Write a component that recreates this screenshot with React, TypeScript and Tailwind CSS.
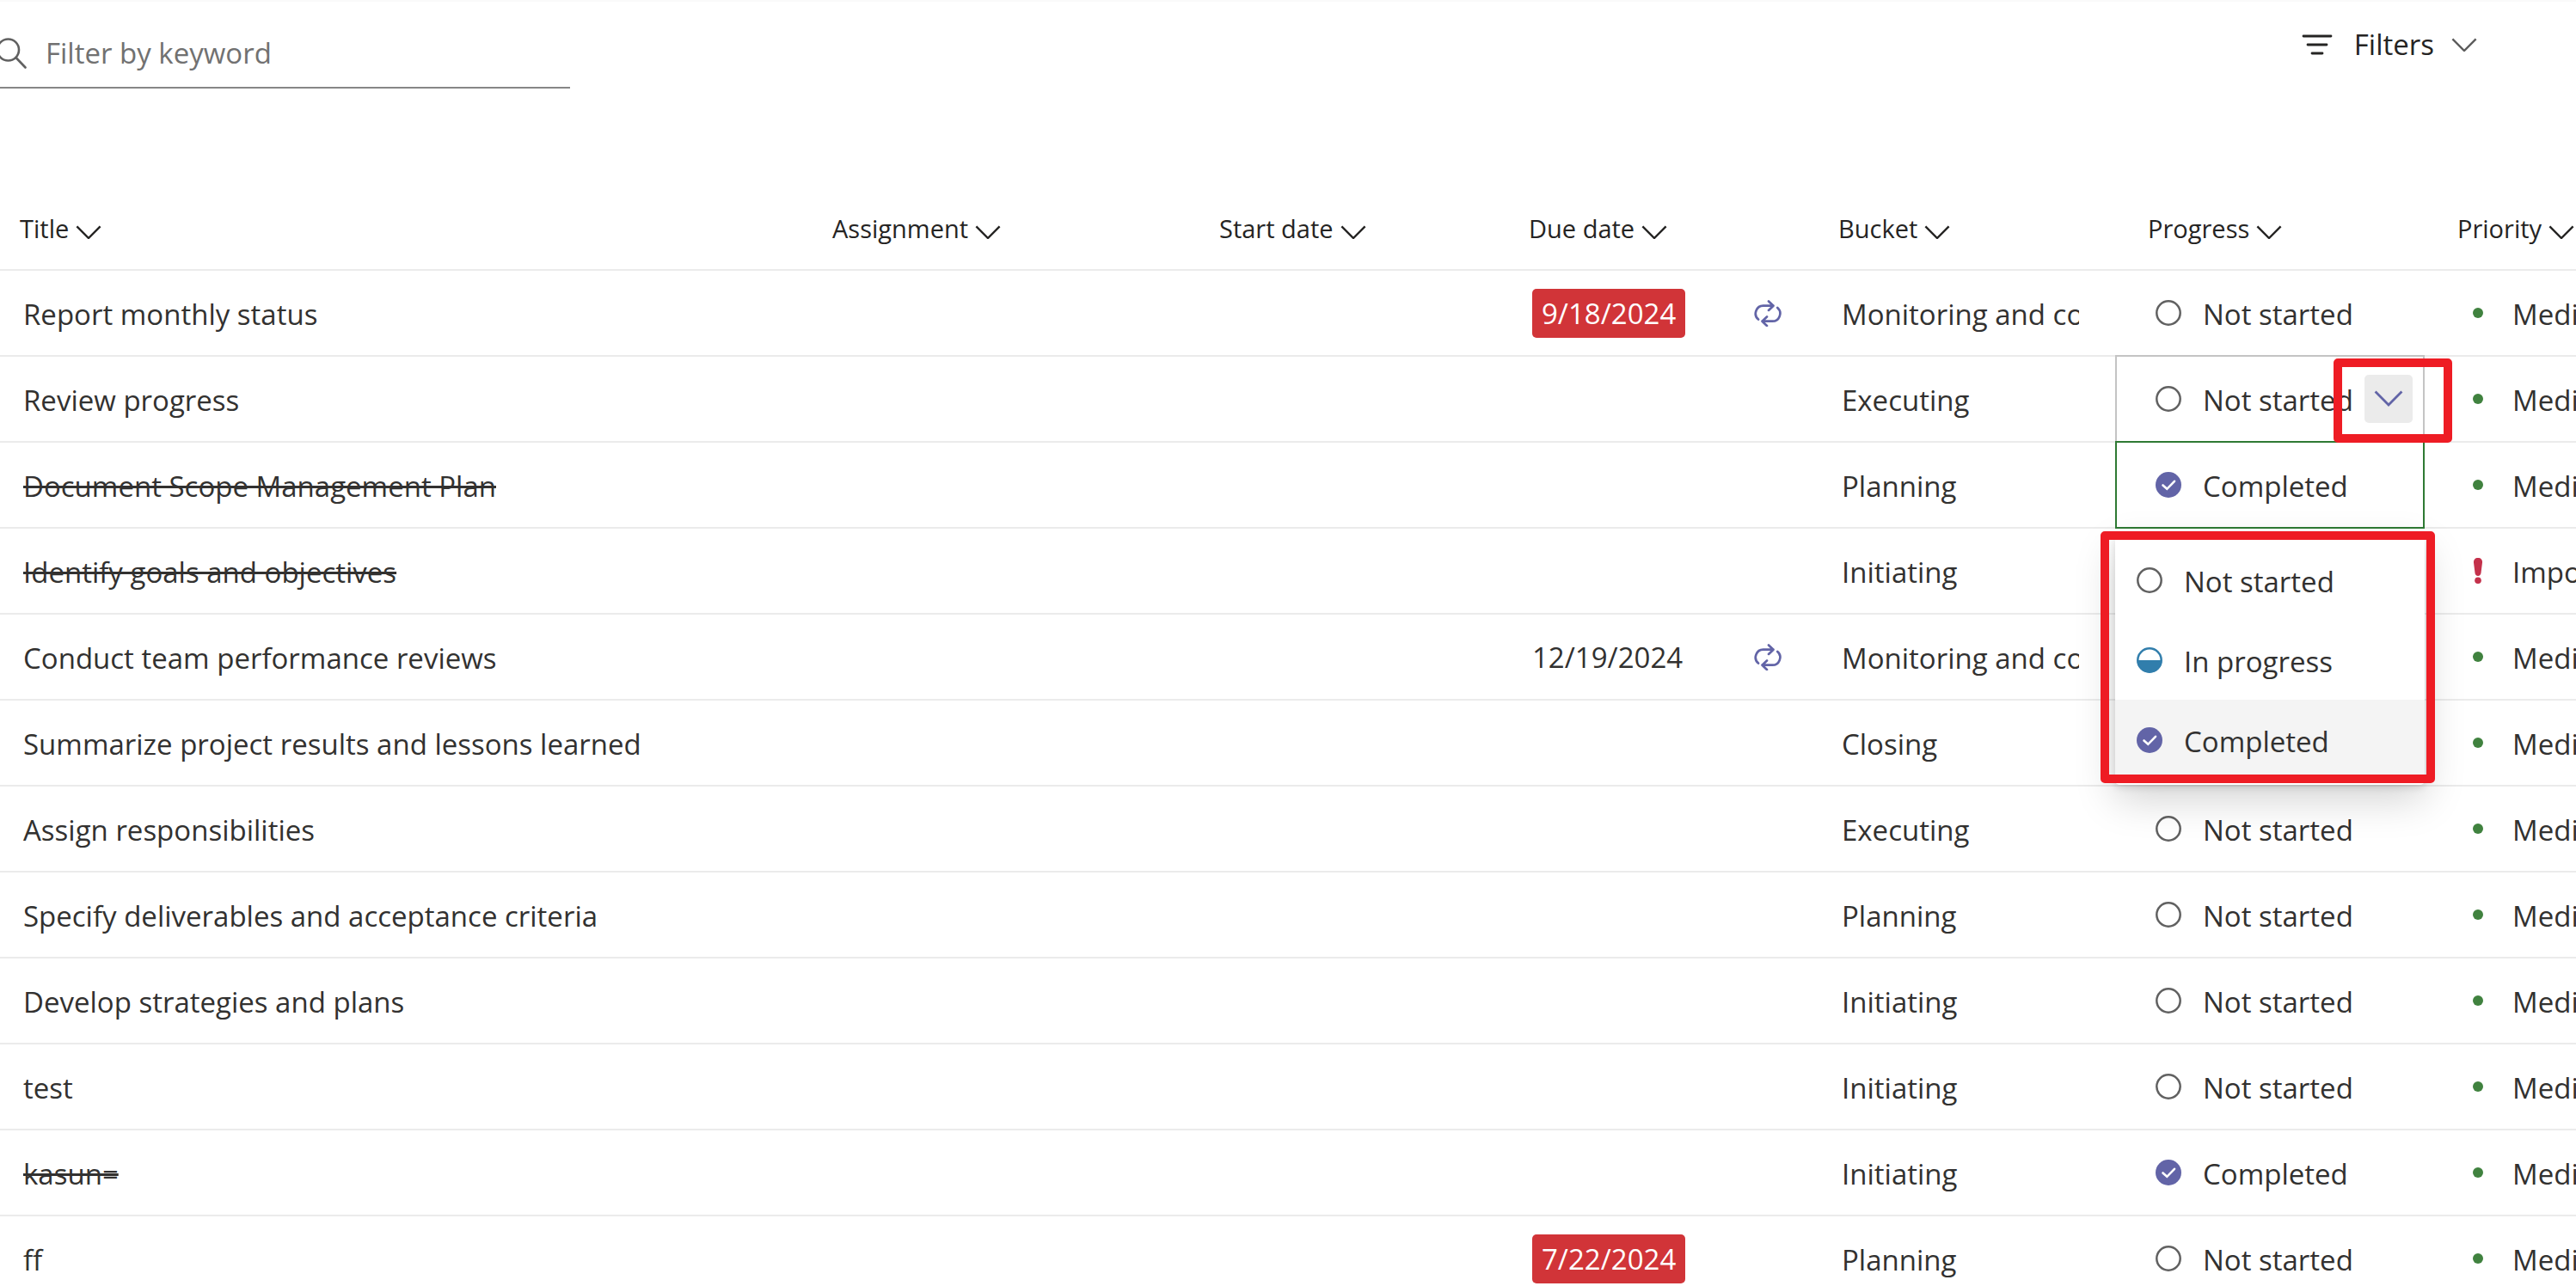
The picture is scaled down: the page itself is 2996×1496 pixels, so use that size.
import clsx from "clsx";

type Progress = "Not started" | "In progress" | "Completed";

type Task = {
  title: string;
  bucket: string;
  progress: Progress;
  priority: "Medium" | "Important";
  due?: string;
  late?: boolean;
  recurring?: boolean;
};

const columns = ["Title", "Assignment", "Start date", "Due date", "Bucket", "Progress", "Priority"];

const options: Progress[] = ["Not started", "In progress", "Completed"];

const tasks: Task[] = [
  { title: "Report monthly status", bucket: "Monitoring and controlling", progress: "Not started", priority: "Medium", due: "9/18/2024", late: true, recurring: true },
  { title: "Review progress", bucket: "Executing", progress: "Not started", priority: "Medium" },
  { title: "Document Scope Management Plan", bucket: "Planning", progress: "Completed", priority: "Medium" },
  { title: "Identify goals and objectives", bucket: "Initiating", progress: "Completed", priority: "Important" },
  { title: "Conduct team performance reviews", bucket: "Monitoring and controlling", progress: "Not started", priority: "Medium", due: "12/19/2024", recurring: true },
  { title: "Summarize project results and lessons learned", bucket: "Closing", progress: "Not started", priority: "Medium" },
  { title: "Assign responsibilities", bucket: "Executing", progress: "Not started", priority: "Medium" },
  { title: "Specify deliverables and acceptance criteria", bucket: "Planning", progress: "Not started", priority: "Medium" },
  { title: "Develop strategies and plans", bucket: "Initiating", progress: "Not started", priority: "Medium" },
  { title: "test", bucket: "Initiating", progress: "Not started", priority: "Medium" },
  { title: "kasun=", bucket: "Initiating", progress: "Completed", priority: "Medium" },
  { title: "ff", bucket: "Planning", progress: "Not started", priority: "Medium", due: "7/22/2024", late: true },
];

// row whose progress cell is hovered, and row whose menu is open
const HOVERED = 1;
const OPEN = 2;

function Chevron({ className }: { className?: string }) {
  return (
    <svg viewBox="0 0 32 18" fill="none" stroke="currentColor" strokeWidth="2.6" className={className}>
      <path d="M1.5 1.5 16 16 30.5 1.5" />
    </svg>
  );
}

function SearchIcon() {
  return (
    <svg viewBox="0 0 36 36" fill="none" stroke="currentColor" strokeWidth="2.6" strokeLinecap="round" className="size-9 shrink-0">
      <circle cx="14.5" cy="14" r="12.5" />
      <path d="m23.5 23 11 11.5" />
    </svg>
  );
}

function FilterIcon() {
  return (
    <svg viewBox="0 0 36 24" fill="none" stroke="currentColor" strokeWidth="2.8" strokeLinecap="round" className="h-6 w-9">
      <path d="M2 2h32M7 12h22M12 22h12" />
    </svg>
  );
}

function RecurringIcon() {
  return (
    <svg viewBox="0 0 32 32" fill="none" stroke="currentColor" strokeWidth="2.7" strokeLinecap="round" strokeLinejoin="round" className="size-8 text-[#6264a7]">
      <path d="M5 23.500A9 9 0 0 1 11.500 7.700h11M17 2.500l5.500 5.200-5.500 5.200" />
      <path d="M27.300 10A9 9 0 0 1 20.800 25.700H9.500M15 20.500l-5.500 5.200 5.500 5.200" />
    </svg>
  );
}

function ProgressIcon({ value }: { value: Progress }) {
  if (value === "Completed") {
    return (
      <svg viewBox="0 0 30 30" fill="none" className="size-[30px] shrink-0">
        <circle cx="15" cy="15" r="15" fill="#6264a7" />
        <path d="m8.500 15.500 4.800 4.300L22 10.800" stroke="#fff" strokeWidth="2.6" strokeLinecap="round" />
      </svg>
    );
  }
  if (value === "In progress") {
    return (
      <svg viewBox="0 0 30 30" fill="none" className="size-[30px] shrink-0">
        <circle cx="15" cy="15" r="13.7" stroke="#317eac" strokeWidth="2.5" />
        <path d="M0.5 15a14.5 14.5 0 0 0 29 0z" fill="#317eac" />
      </svg>
    );
  }
  return (
    <svg viewBox="0 0 30 30" fill="none" className="size-[30px] shrink-0">
      <circle cx="15" cy="15" r="13.7" stroke="#616161" strokeWidth="2.5" />
    </svg>
  );
}

function PriorityIcon({ value }: { value: Task["priority"] }) {
  return (
    <svg viewBox="0 0 12 30" className="h-[30px] w-3 shrink-0">
      {value === "Important" ? (
        <g fill="#c4314b">
          <path d="M6 0c3.200 0 5.300 2 5 5.500L9.500 17.500c-.3 2.300-1.600 3.500-3.500 3.500s-3.200-1.200-3.500-3.500L1 5.500C.7 2 2.800 0 6 0z" />
          <circle cx="6" cy="26.200" r="3.800" />
        </g>
      ) : (
        <circle cx="6" cy="15" r="6" fill="#40823f" />
      )}
    </svg>
  );
}

function ProgressMenu() {
  return (
    <div
      role="menu"
      className="absolute inset-x-0 top-full z-20 mt-[11px] rounded-[5px] bg-white pt-1 pb-1.5 shadow-[0_16px_48px_rgba(0,0,0,0.18),0_3px_9px_rgba(0,0,0,0.12)]"
    >
      {options.map((option) => (
        <button
          key={option}
          role="menuitem"
          className={clsx("flex h-[93px] w-full items-center gap-[25px] px-[25px]", option === "Completed" && "bg-[#f4f4f4]")}
        >
          <ProgressIcon value={option} />
          <span className="pt-1">{option}</span>
        </button>
      ))}
      <div className="pointer-events-none absolute -top-1.5 -right-3 bottom-0.5 -left-[17px] rounded-[5px] border-10 border-[#ee1c24]" />
    </div>
  );
}

function TaskRow({ task, index }: { task: Task; index: number }) {
  const cell = "border-b-2 border-[#ebebeb] p-0";

  return (
    <tr className="h-[100px]">
      <td className={cell}>
        <div className={clsx("overflow-hidden pt-1 pl-[27px] whitespace-nowrap", task.progress === "Completed" && "line-through decoration-3")}>
          {task.title}
        </div>
      </td>
      <td className={cell} />
      <td className={cell} />
      <td className={cell}>
        <div className="flex items-center justify-between pr-7 pl-[42px]">
          {task.due && (
            <span className={clsx("leading-[57px]", task.late && "rounded-[5px] bg-[#d13438] px-[11px] text-white")}>{task.due}</span>
          )}
          {task.recurring && <RecurringIcon />}
        </div>
      </td>
      <td className={cell}>
        <div className="mx-[42px] overflow-hidden pt-1 whitespace-nowrap">{task.bucket}</div>
      </td>
      <td className={clsx(cell, "relative", index === OPEN && "z-10")}>
        <div className="flex items-center gap-[25px] pl-[47px] whitespace-nowrap">
          <ProgressIcon value={task.progress} />
          <span className="pt-1">{task.progress}</span>
        </div>
        {index === HOVERED && (
          <>
            <div className="absolute inset-x-0 -inset-y-0.5 flex items-center justify-end border-2 border-[#c4c4c4] pr-3">
              <button aria-label="Change progress" className="flex size-14 items-center justify-center rounded-[5px] bg-[#ebebeb] text-[#6264a7]">
                <Chevron className="w-[34px]" />
              </button>
            </div>
            <div className="pointer-events-none absolute top-0.5 -right-8 -bottom-0.5 z-20 w-[138px] rounded-[5px] border-10 border-[#ee1c24]" />
          </>
        )}
        {index === OPEN && (
          <>
            <div className="absolute inset-x-0 -inset-y-0.5 border-2 border-[#2f7a34]" />
            <ProgressMenu />
          </>
        )}
      </td>
      <td className={cell}>
        <div className="flex items-center gap-[34px] pl-14">
          <PriorityIcon value={task.priority} />
          <span className="pt-1">{task.priority}</span>
        </div>
      </td>
    </tr>
  );
}

export default function App() {
  return (
    <main className="h-screen overflow-hidden bg-white font-['Open_Sans',sans-serif] text-[33px] leading-[46px] text-[#323130]">
      <header className="flex items-start justify-between border-t-2 border-[#fafafa] pt-5 pr-[115px]">
        <label className="-ml-[5px] flex h-[81px] w-[668px] items-center gap-[22px] border-b-2 border-[#868686] text-[#616161]">
          <SearchIcon />
          <span className="sr-only">Filter by keyword</span>
          <input type="text" placeholder="Filter by keyword" className="min-w-0 flex-1 outline-none placeholder:text-[#717171]" />
        </label>
        <button className="flex h-[60px] items-center text-[#252423]">
          <FilterIcon />
          <span className="pr-5 pl-[25px]">Filters</span>
          <Chevron className="w-[30px] text-[#5c5c5c]" />
        </button>
      </header>

      {/* the last column runs off the right edge */}
      <table className="mt-28 w-[calc(100%+184px)] table-fixed border-separate border-spacing-0 text-left">
        <colgroup>
          <col />
          <col className="w-[450px]" />
          <col className="w-[360px]" />
          <col className="w-[360px]" />
          <col className="w-[360px]" />
          <col className="w-[360px]" />
          <col className="w-[360px]" />
        </colgroup>
        <thead>
          <tr className="h-[100px]">
            {columns.map((column, i) => (
              <th key={column} className={clsx("border-b-2 border-[#ebebeb] p-0 pt-1 text-[29px] font-normal text-[#252423]", i === 0 ? "pl-[23px]" : "pl-[38px]")}>
                <button className="flex items-center gap-2">
                  {column}
                  <Chevron className="mt-2 w-[30px]" />
                </button>
              </th>
            ))}
          </tr>
        </thead>
        <tbody>
          {tasks.map((task, i) => (
            <TaskRow key={task.title} task={task} index={i} />
          ))}
        </tbody>
      </table>
    </main>
  );
}
